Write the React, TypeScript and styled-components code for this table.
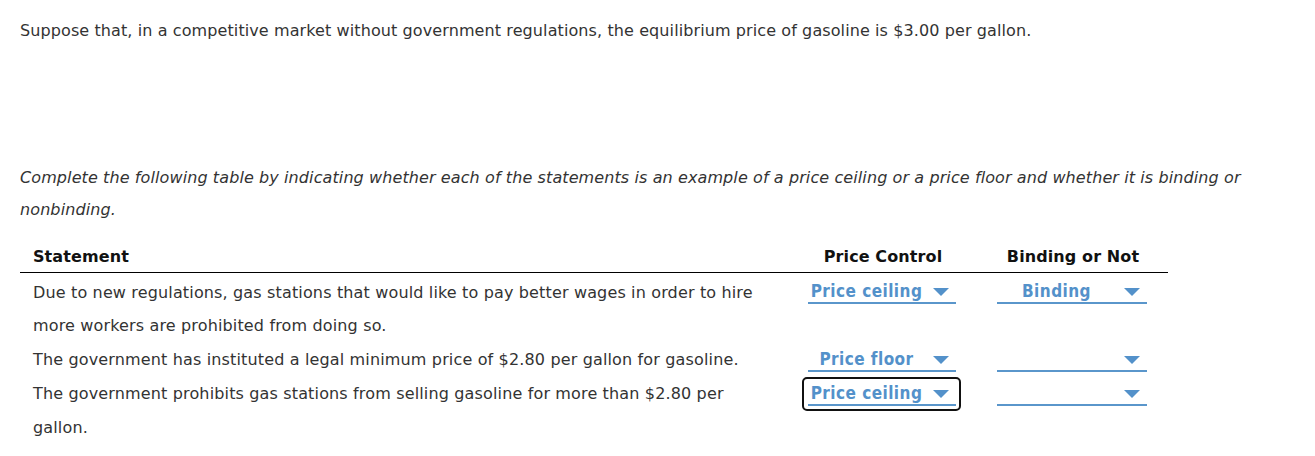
import React from 'react';
import styled, { createGlobalStyle } from 'styled-components';

const GlobalStyle = createGlobalStyle`
  body {
    margin: 0;
    background: #fff;
    font-family: "DejaVu Sans", Verdana, sans-serif;
    color: #333;
  }
`;

const Page = styled.div`
  padding: 15px 20px 0 20px;
  width: 1275px;
`;

const Intro = styled.p`
  margin: 0;
  font-size: 16px;
  letter-spacing: 0.1px;
  line-height: 32px;
`;

const Instructions = styled.p`
  margin: 115px 0 16px 0;
  font-size: 16px;
  letter-spacing: 0.1px;
  line-height: 32px;
  font-style: italic;
`;

const Table = styled.div`
  width: 1148px;
  display: grid;
  grid-template-columns: 1fr 190px 190px;
`;

const HeadCell = styled.div<{ align?: string }>`
  font-size: 16px;
  letter-spacing: 0.1px;
  font-weight: bold;
  color: #111;
  line-height: 30px;
  padding-left: ${p => (p.align === 'left' ? '13px' : '0')};
  text-align: ${p => p.align || 'center'};
  border-bottom: 1px solid #000;
  margin-bottom: 2px;
`;

const StatementCell = styled.div`
  font-size: 16px;
  letter-spacing: 0.15px;
  line-height: 33.5px;
  padding: 0.5px 20px 0 13px;
`;

const ControlCell = styled.div`
  display: flex;
  justify-content: center;
  align-items: flex-start;
  padding-right: 4px;
`;

const Frame = styled.div<{ focused?: boolean }>`
  border: 2px solid ${p => (p.focused ? '#111' : 'transparent')};
  border-radius: 5px;
  padding: 3px 3px 3px 4px;
`;

const Select = styled.div<{ width: number }>`
  position: relative;
  width: ${p => p.width}px;
  height: 24px;
  box-sizing: border-box;
  border-bottom: 2px solid #5a96cb;
  padding-right: 30px;
  text-align: center;
  font-family: "DejaVu Sans Condensed", "DejaVu Sans", Tahoma, sans-serif;
  font-stretch: condensed;
  font-weight: bold;
  font-size: 17px;
  letter-spacing: 0.45px;
  line-height: 22px;
  color: #5391ca;
  white-space: nowrap;
`;

const Arrow = styled.span`
  position: absolute;
  right: 7px;
  top: 8px;
  width: 0;
  height: 0;
  border-left: 8px solid transparent;
  border-right: 8px solid transparent;
  border-top: 8px solid #5391ca;
`;

interface Row {
  text: string;
  control: string;
  binding: string;
  focused?: boolean;
}

const rows: Row[] = [
  {
    text: 'Due to new regulations, gas stations that would like to pay better wages in order to hire more workers are prohibited from doing so.',
    control: 'Price ceiling',
    binding: 'Binding',
  },
  {
    text: 'The government has instituted a legal minimum price of $2.80 per gallon for gasoline.',
    control: 'Price floor',
    binding: '',
  },
  {
    text: 'The government prohibits gas stations from selling gasoline for more than $2.80 per gallon.',
    control: 'Price ceiling',
    binding: '',
    focused: true,
  },
];

const App: React.FC = () => {
  return (
    <>
      <GlobalStyle />
      <Page>
        <Intro>
          Suppose that, in a competitive market without government regulations, the equilibrium price of gasoline is $3.00 per gallon.
        </Intro>
        <Instructions>
          Complete the following table by indicating whether each of the statements is an example of a price ceiling or a price floor and whether it is binding or nonbinding.
        </Instructions>
        <Table>
          <HeadCell align="left">Statement</HeadCell>
          <HeadCell>Price Control</HeadCell>
          <HeadCell>Binding or Not</HeadCell>
          {rows.map((row, index) => (
            <React.Fragment key={index}>
              <StatementCell>{row.text}</StatementCell>
              <ControlCell>
                <Frame focused={row.focused}>
                  <Select width={148}>
                    {row.control}
                    <Arrow />
                  </Select>
                </Frame>
              </ControlCell>
              <ControlCell>
                <Frame>
                  <Select width={150}>
                    {row.binding}
                    <Arrow />
                  </Select>
                </Frame>
              </ControlCell>
            </React.Fragment>
          ))}
        </Table>
      </Page>
    </>
  );
};

export default App;
